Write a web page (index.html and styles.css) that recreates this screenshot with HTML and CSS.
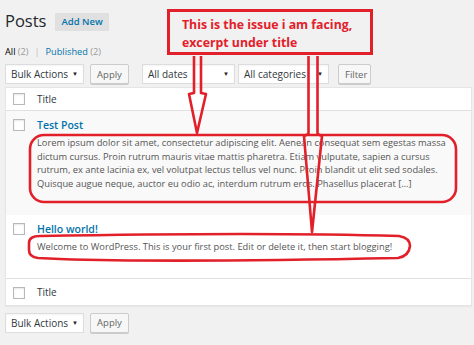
FILE: index.html
```html
<!DOCTYPE html>
<html lang="en">
<head>
    <meta charset="UTF-8">
    <meta name="viewport" content="width=device-width, initial-scale=1.0">
    <title>Posts</title>
    <link rel="stylesheet" href="styles.css">
</head>
<body>
    <div class="wrap">
        <div class="page-title">
            <h1>Posts</h1>
            <a href="#" class="add-new">Add New</a>
        </div>

        <ul class="subsubsub">
            <li class="current">All <span class="count">(2)</span></li>
            <li class="sep">|</li>
            <li><a href="#">Published <span class="count">(2)</span></a></li>
        </ul>

        <div class="tablenav">
            <div class="select bulk">Bulk Actions <span class="caret">&#9660;</span></div>
            <button class="button apply">Apply</button>
            <div class="select dates">All dates <span class="caret">&#9660;</span></div>
            <div class="select cats">All categories <span class="caret">&#9660;</span></div>
            <button class="button filter">Filter</button>
        </div>

        <table class="list-table">
            <thead>
                <tr>
                    <th class="check"><span class="checkbox"></span></th>
                    <th class="title-col">Title</th>
                </tr>
            </thead>
            <tbody>
                <tr class="alt">
                    <td class="check"><span class="checkbox"></span></td>
                    <td class="title-col">
                        <a href="#" class="row-title">Test Post</a>
                        <p class="excerpt">Lorem ipsum dolor sit amet, consectetur adipiscing elit. Aenean consequat sem egestas massa<br>dictum cursus. Proin rutrum mauris vitae mattis pharetra. Etiam vulputate, sapien a cursus<br>rutrum, ex ante lacinia ex, vel volutpat lectus tellus vel nunc. Proin blandit ut elit sed sodales.<br>Quisque augue neque, auctor eu odio ac, interdum rutrum eros. Phasellus placerat [&hellip;]</p>
                        <div class="row-actions"></div>
                    </td>
                </tr>
                <tr>
                    <td class="check"><span class="checkbox"></span></td>
                    <td class="title-col">
                        <a href="#" class="row-title">Hello world!</a>
                        <p class="excerpt">Welcome to WordPress. This is your first post. Edit or delete it, then start blogging!</p>
                        <div class="row-actions"></div>
                    </td>
                </tr>
            </tbody>
            <tfoot>
                <tr>
                    <th class="check"><span class="checkbox"></span></th>
                    <th class="title-col">Title</th>
                </tr>
            </tfoot>
        </table>

        <div class="tablenav bottom">
            <div class="select bulk">Bulk Actions <span class="caret">&#9660;</span></div>
            <button class="button apply">Apply</button>
        </div>
    </div>

    <!-- annotation drawn over the screenshot -->
    <div class="callout">This is the issue i am facing,<br>excerpt under title</div>
    <svg class="marks" width="474" height="345" viewBox="0 0 474 345">
        <g fill="none" stroke="#e2202a" stroke-width="2.6" stroke-linejoin="round">
            <path d="M194 56 L194 93 L189 94 L197 133 L206 94 L201 93 L201 56"/>
            <path d="M308.5 56 L308.5 134 L304 136 L312 232 L322 136 L317.5 134 L317.5 56"/>
            <rect x="30" y="135" width="426" height="67" rx="14"/>
            <path d="M40 236 C150 234 300 233 399 236 Q410 238 410 246 Q409 256 398 258 C300 260 150 262 60 259 L38 258 Q29 257 29 250 L29 243 Q29 236 40 236 Z"/>
        </g>
    </svg>
</body>
</html>
```

FILE: styles.css
```css
/* styles.css */
body {
    margin: 0;
    background-color: #f1f1f1;
    font-family: "Open Sans", "Liberation Sans", sans-serif;
    color: #444;
    font-size: 10px;
    position: relative;
    width: 474px;
    height: 345px;
    overflow: hidden;
}

a {
    color: #0073aa;
    text-decoration: none;
}

.wrap {
    padding: 0 2px 0 5px;
}

/* heading */
.page-title {
    display: flex;
    align-items: center;
    gap: 9px;
    padding-top: 8px;
    height: 25px;
}

.page-title h1 {
    margin: 0;
    font-size: 16.5px;
    font-weight: 400;
    line-height: 24px;
    color: #23282d;
}

.add-new {
    display: block;
    height: 18px;
    line-height: 18px;
    padding: 0 6px;
    margin-top: 2px;
    background-color: #e0e0e0;
    font-size: 9.5px;
    font-weight: 600;
}

.subsubsub {
    list-style: none;
    margin: 12px 0 0;
    padding: 0;
    display: flex;
    gap: 4px;
    font-size: 9.2px;
    line-height: 14px;
    color: #666;
}

.subsubsub .current {
    color: #000;
}

.subsubsub .count {
    color: #999;
}

.subsubsub .sep {
    color: #bbb;
    padding: 0 2px;
}

/* filters */
.tablenav {
    display: flex;
    height: 20px;
    margin-top: 5px;
}

.tablenav.bottom {
    margin-top: 7px;
}

.select {
    box-sizing: border-box;
    height: 20px;
    line-height: 18px;
    padding: 0 5px;
    background-color: #fff;
    border: 1px solid #ddd;
    box-shadow: inset 0 1px 2px rgba(0, 0, 0, 0.05);
    font-size: 10px;
    color: #32373c;
    display: flex;
    justify-content: space-between;
}

.caret {
    font-size: 6px;
    color: #222;
}

.button {
    box-sizing: border-box;
    height: 20px;
    padding: 0 6px;
    background-color: #f7f7f7;
    border: 1px solid #ccc;
    border-radius: 2px;
    box-shadow: 0 1px 0 #ccc;
    font-family: inherit;
    font-size: 9.5px;
    color: #666;
}

.bulk { width: 79px; }
.apply { width: 39px; margin-left: 6px; }
.dates { width: 93px; margin-left: 13px; }
.cats { width: 91px; margin-left: 3px; }
.filter { width: 33px; margin-left: 9px; }

/* table */
.list-table {
    width: 100%;
    margin-top: 3px;
    border: 1px solid #e5e5e5;
    border-spacing: 0;
    background-color: #fff;
    box-shadow: 0 1px 1px rgba(0, 0, 0, 0.04);
}

.list-table th,
.list-table td {
    padding: 0;
    text-align: left;
    vertical-align: top;
}

.list-table th {
    font-weight: 400;
    font-size: 10px;
    line-height: 16px;
    color: #32373c;
}

.list-table thead th {
    padding: 3px 0;
    border-bottom: 1px solid #e1e1e1;
}

.list-table tfoot th {
    padding: 5px 0;
    border-top: 1px solid #e1e1e1;
}

.list-table .check {
    width: 31px;
    padding-left: 7px;
    box-sizing: border-box;
}

.list-table thead .check { padding-top: 5px; }
.list-table tbody .check { padding-top: 8px; }
.list-table tfoot .check { padding-top: 8px; }

.checkbox {
    display: block;
    box-sizing: border-box;
    width: 12px;
    height: 12px;
    border: 1px solid #b4b9be;
    background-color: #fff;
    box-shadow: inset 0 1px 2px rgba(0, 0, 0, 0.1);
}

.list-table tr.alt td {
    background-color: #f9f9f9;
}

.list-table td.title-col {
    padding: 6px 8px 8px 0;
}

.row-title {
    display: block;
    font-size: 10.5px;
    font-weight: 600;
    line-height: 16px;
}

.excerpt {
    margin: 3px 0 0;
    font-size: 9.3px;
    line-height: 13.7px;
    color: #555;
    white-space: nowrap;
}

.row-actions {
    height: 16px;
}

/* red annotation */
.callout {
    position: absolute;
    left: 167px;
    top: 9px;
    width: 206px;
    height: 46px;
    box-sizing: border-box;
    border: 3px solid #e2202a;
    padding: 4px 0 0 12px;
    font-size: 12.3px;
    font-weight: 700;
    line-height: 18px;
    color: #e2202a;
}

.marks {
    position: absolute;
    left: 0;
    top: 0;
    pointer-events: none;
}
```
